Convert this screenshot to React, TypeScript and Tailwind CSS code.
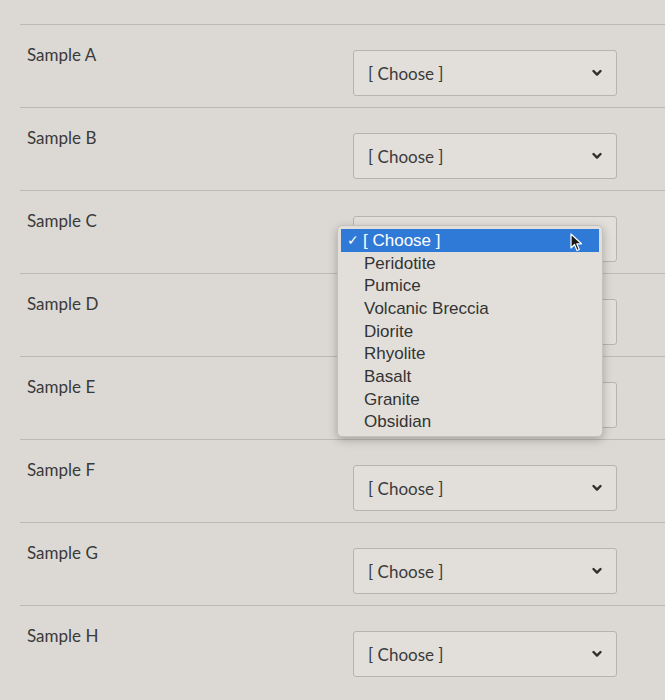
import React from "react";

const rows = ["A", "B", "C", "D", "E", "F", "G", "H"];
const covered = ["C", "D", "E"];
const options = ["Peridotite", "Pumice", "Volcanic Breccia", "Diorite", "Rhyolite", "Basalt", "Granite", "Obsidian"];

function Chevron() {
  return (
    <svg width="10" height="8" viewBox="0 0 10 8" className="shrink-0">
      <path d="M1.5 2 L5 5.6 L8.5 2" fill="none" stroke="#2f2f2f" strokeWidth="2.4" strokeLinecap="round" strokeLinejoin="round" />
    </svg>
  );
}

export default function App() {
  return (
    <div className="relative w-[665px] h-[700px] overflow-hidden bg-[#dcd9d4]" style={{ fontFamily: "Lato, 'Open Sans', sans-serif" }}>
      <div className="pl-[20px] pt-[24px]">
        <div className="border-t border-[#bdbab5]">
          {rows.map((r, i) => (
            <div key={r} className={i < rows.length - 1 ? "h-[83px] border-b border-[#bdbab5] flex items-start" : "h-[83px] flex items-start"}>
              <div className="pl-[7px] pt-[20px] text-[17px] text-[#3a3a3a] leading-[20px]">Sample {r}</div>
              <div className="ml-auto mr-[48px] mt-[25px] w-[264px] h-[46px] rounded-[3px] border border-[#b7b4af] bg-[#e2dfda] flex items-center pl-[14px] pr-[14px]">
                <span className={covered.includes(r) ? "invisible text-[17px] pt-[2px] flex-1" : "text-[17px] text-[#3a3a3a] pt-[2px] flex-1"}>[ Choose ]</span>
                <Chevron />
              </div>
            </div>
          ))}
        </div>
      </div>

      <div
        className="absolute left-[337px] top-[225px] w-[266px] h-[212px] rounded-[5px] bg-[#e2dfda] border border-[#c4c1bc] shadow-[0_3px_10px_rgba(0,0,0,0.25)] pt-[3px]"
        style={{ fontFamily: "'Liberation Sans', Arial, sans-serif" }}
      >
        <div className="mx-[3px] h-[23px] bg-[#2f7ad6] flex items-center text-white text-[17px] relative">
          <span className="w-[22px] pl-[6px] text-[14px]">✓</span>
          <span>[ Choose ]</span>
          <svg className="absolute left-[229px] top-[4px]" width="14" height="20" viewBox="0 0 14 20">
            <path d="M1 1 L1 15 L4.5 11.5 L7 17.5 L9.3 16.5 L6.8 10.8 L11.5 10.8 Z" fill="#1a1a1a" stroke="#ffffff" strokeWidth="1.2" strokeLinejoin="round" />
          </svg>
        </div>
        {options.map((o) => (
          <div key={o} className="h-[22.7px] flex items-center pl-[26px] text-[17px] text-[#333333]">
            {o}
          </div>
        ))}
      </div>
    </div>
  );
}
